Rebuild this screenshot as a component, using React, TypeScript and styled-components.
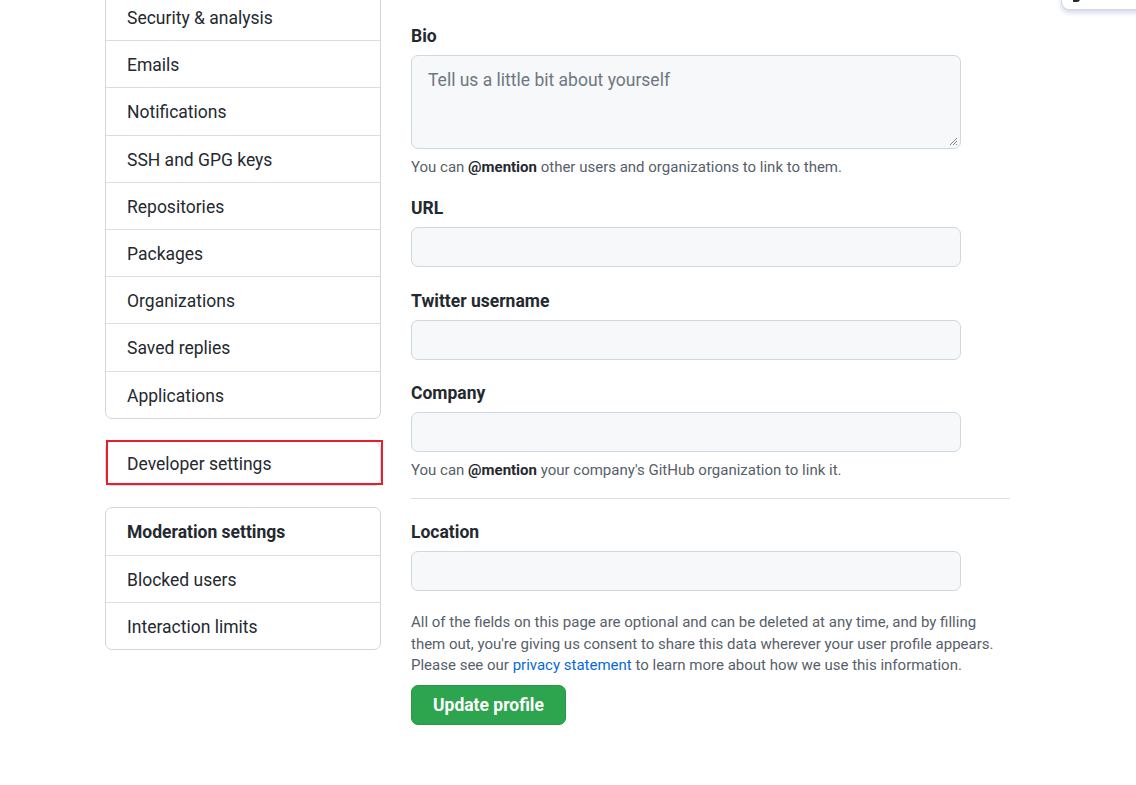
import React from "react";
import styled, { createGlobalStyle } from "styled-components";

const Global = createGlobalStyle`
  html, body { margin: 0; padding: 0; background: #ffffff; }
  body {
    font-family: Roboto, "Liberation Sans", sans-serif;
    color: #24292f;
    overflow: hidden;
    height: 785px;
  }
  * { box-sizing: border-box; }
`;

const Page = styled.div`
  position: relative;
  display: flex;
  align-items: flex-start;
  gap: 30px;
  padding-left: 105px;
  width: 1136px;
  height: 785px;
  overflow: hidden;
`;

const Sidebar = styled.nav`
  width: 276px;
  margin-top: -8px;
  display: flex;
  flex-direction: column;
`;

const MenuBox = styled.div<{ $gap?: number }>`
  border: 1px solid #d0d7de;
  border-radius: 7px;
  margin-bottom: ${(p) => p.$gap ?? 22}px;
  position: relative;
`;

const MenuItem = styled.div<{ $bold?: boolean; $h?: number }>`
  height: ${(p) => p.$h ?? 47.2}px;
  display: flex;
  align-items: center;
  padding: 2px 21px 0;
  font-size: 17.5px;
  font-weight: ${(p) => (p.$bold ? 700 : 400)};
  color: #24292f;
  border-top: 1px solid #d8dee4;
  &:first-child { border-top: none; }
`;

const Highlight = styled.div`
  position: absolute;
  left: 0;
  right: -3px;
  top: -2px;
  height: 45px;
  border: 2px solid #e3202b;
  pointer-events: none;
`;

const Main = styled.main`
  width: 599px;
  padding-top: 22.5px;
  display: flex;
  flex-direction: column;
`;

const Group = styled.div`
  margin-bottom: 20px;
  display: flex;
  flex-direction: column;
`;

const Label = styled.label`
  font-size: 17.5px;
  font-weight: 700;
  line-height: 25px;
  padding-top: 1.5px;
  margin-bottom: 6px;
`;

const Input = styled.div<{ $h?: number }>`
  width: 550px;
  height: ${(p) => p.$h ?? 40}px;
  background: #f6f8fa;
  border: 1px solid #d0d7de;
  border-radius: 7px;
  position: relative;
`;

const Placeholder = styled.span`
  position: absolute;
  left: 16px;
  top: 12px;
  font-size: 17.5px;
  line-height: 25px;
  color: #6e7781;
`;

const Grip = styled.svg`
  position: absolute;
  right: 2px;
  bottom: 2px;
`;

const Note = styled.p`
  margin: 7.5px 0 -3px;
  font-size: 15px;
  line-height: 21px;
  color: #57606a;
  b { color: #24292f; font-weight: 700; }
`;

const Divider = styled.hr`
  width: 599px;
  margin: 0 0 20px;
  border: none;
  border-top: 1px solid #d8dee4;
`;

const Info = styled.p`
  margin: 1px 0 8.5px;
  font-size: 15px;
  line-height: 21.5px;
  color: #57606a;
  white-space: nowrap;
  a { color: #0969da; text-decoration: none; }
`;

const Button = styled.button`
  align-self: flex-start;
  height: 40px;
  padding: 0 21px;
  background: #2da44e;
  border: 1px solid #28974a;
  border-radius: 7px;
  color: #ffffff;
  font-family: inherit;
  font-size: 17.5px;
  font-weight: 700;
`;

const Popover = styled.div`
  position: absolute;
  left: 1061px;
  top: -30px;
  width: 100px;
  height: 40px;
  border: 1px solid #d0d7de;
  border-radius: 8px;
  background: #fff;
  box-shadow: 0 3px 4px rgba(140, 149, 200, 0.35);
`;

const PopGlyph = styled.div`
  position: absolute;
  left: 11px;
  bottom: 7px;
  width: 7px;
  height: 3px;
  background: #24292f;
  border-radius: 0 0 3px 0;
`;

export default function App() {
  const top = [
    "Security & analysis",
    "Emails",
    "Notifications",
    "SSH and GPG keys",
    "Repositories",
    "Packages",
    "Organizations",
    "Saved replies",
    "Applications",
  ];
  return (
    <>
      <Global />
      <Page>
        <Sidebar>
          <MenuBox>
            {top.map((t) => (
              <MenuItem key={t}>{t}</MenuItem>
            ))}
          </MenuBox>
          <MenuBox $gap={21}>
            <MenuItem $h={43}>Developer settings</MenuItem>
            <Highlight />
          </MenuBox>
          <MenuBox>
            <MenuItem $bold $h={47}>Moderation settings</MenuItem>
            <MenuItem>Blocked users</MenuItem>
            <MenuItem>Interaction limits</MenuItem>
          </MenuBox>
        </Sidebar>
        <Main>
          <Group>
            <Label>Bio</Label>
            <Input $h={94}>
              <Placeholder>Tell us a little bit about yourself</Placeholder>
              <Grip width="10" height="10" viewBox="0 0 10 10">
                <path d="M9 2 L2 9 M9 5 L5 9 M9 8 L8 9" stroke="#6e7781" strokeWidth="0.9" />
              </Grip>
            </Input>
            <Note>
              You can <b>@mention</b> other users and organizations to link to them.
            </Note>
          </Group>
          <Group>
            <Label>URL</Label>
            <Input />
          </Group>
          <Group>
            <Label>Twitter username</Label>
            <Input />
          </Group>
          <Group>
            <Label>Company</Label>
            <Input />
            <Note>
              You can <b>@mention</b> your company's GitHub organization to link it.
            </Note>
          </Group>
          <Divider />
          <Group>
            <Label>Location</Label>
            <Input />
          </Group>
          <Info>
            All of the fields on this page are optional and can be deleted at any time, and by filling
            <br />
            them out, you're giving us consent to share this data wherever your user profile appears.
            <br />
            Please see our <a href="#">privacy statement</a> to learn more about how we use this information.
          </Info>
          <Button>Update profile</Button>
        </Main>
        <Popover>
          <PopGlyph />
        </Popover>
      </Page>
    </>
  );
}
